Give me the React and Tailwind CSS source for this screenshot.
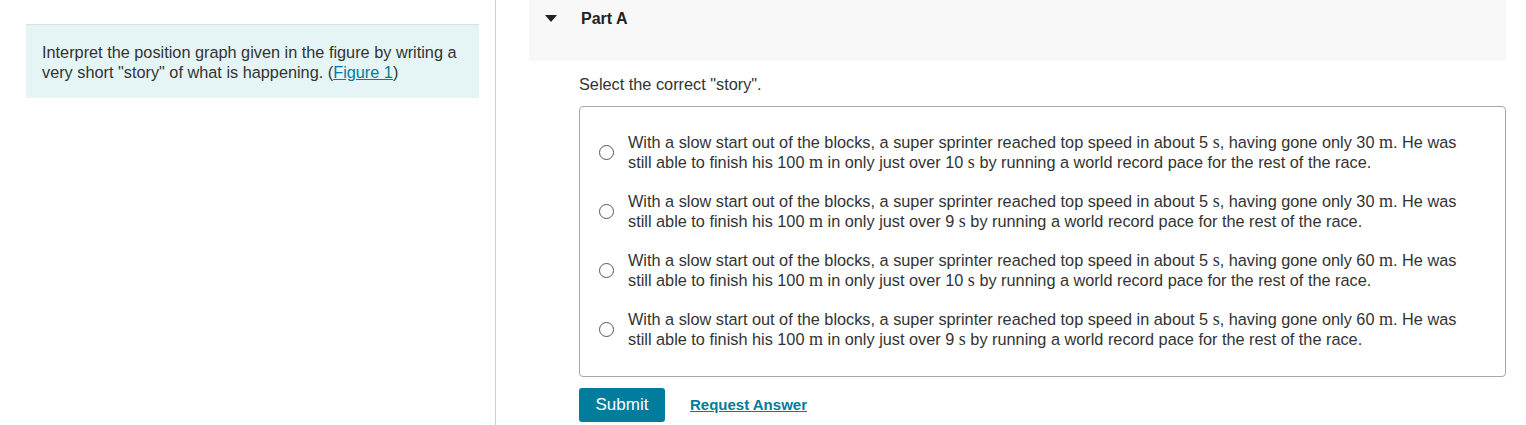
const options = [
  { dist: "30", time: "10" },
  { dist: "30", time: "9" },
  { dist: "60", time: "10" },
  { dist: "60", time: "9" },
];

function M({ children }) {
  return <span className="font-['Liberation_Serif',serif] text-[18px] leading-[16px]">{children}</span>;
}

export default function App() {
  return (
    <div className="flex h-[425px] bg-white text-[#333] font-['Liberation_Sans',Arial,sans-serif] text-[16.3px]">
      {/* Left column */}
      <div className="w-[496px] shrink-0 border-r border-[#c5d5e8] pl-[26px] pr-[16px] pt-[24px]">
        <div className="bg-[#e5f5f6] border-t border-[#d6e0e4] px-[16px] pt-[17px] pb-[16px] leading-[20px]">
          Interpret the position graph given in the figure by writing a very short "story" of what is happening. (
          <a href="#" className="text-[#007c9c] underline">Figure 1</a>)
        </div>
      </div>

      {/* Right column */}
      <div className="flex-1 pl-[33px] pr-[20px]">
        <div className="bg-[#f8f8f8] h-[61px] flex items-start pt-[9px] pl-[16px]">
          <svg width="12" height="8" viewBox="0 0 12 8" className="mt-[6px]">
            <path d="M0 0 H12 L6 7 Z" fill="#222" />
          </svg>
          <span className="ml-[24px] font-bold text-[16px] leading-[20px] text-[#222]">Part A</span>
        </div>

        <div className="pl-[50px]">
          <p className="mt-[13px] leading-[20px]">Select the correct "story".</p>

          <div className="mt-[12px] border border-[#a8a8a8] rounded-[4px] pt-[25px] pb-[27px] pl-[19px] pr-[26px] flex flex-col gap-[19px]">
            {options.map((o, i) => (
              <label key={i} className="flex items-center">
                <span className="w-[15px] h-[15px] rounded-full border border-[#555] bg-white shrink-0" />
                <span className="ml-[14px] leading-[20px]">
                  With a slow start out of the blocks, a super sprinter reached top speed in about 5 <M>s</M>, having gone only {o.dist} <M>m</M>. He was still able to finish his 100 <M>m</M> in only just over {o.time} <M>s</M> by running a world record pace for the rest of the race.
                </span>
              </label>
            ))}
          </div>

          <div className="mt-[11px] flex items-center">
            <button className="bg-[#007c9c] text-white text-[17px] h-[34px] w-[86px] rounded-[3px]">Submit</button>
            <a href="#" className="ml-[25px] text-[#007c9c] font-bold underline text-[15px]">Request Answer</a>
          </div>
        </div>
      </div>
    </div>
  );
}
